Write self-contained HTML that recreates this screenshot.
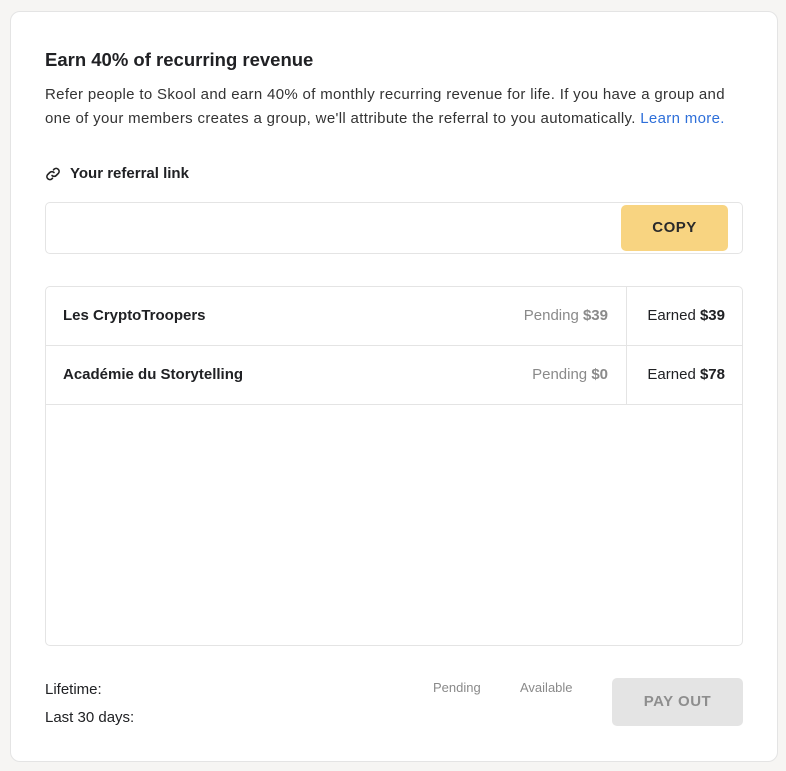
<!DOCTYPE html>
<html><head><style>
body{margin:0;width:786px;height:771px;background:#f6f5f3;font-family:"Liberation Sans",sans-serif;color:#202124;position:relative;overflow:hidden}
.card{position:absolute;left:10px;top:11px;width:766px;height:749px;background:#fff;border:1px solid #e4e4e4;border-radius:10px}
.a{position:absolute;white-space:nowrap}
.line{position:absolute;background:#e4e4e4}
</style></head><body>
<div class="card"></div>
<div class="a" style="left:45px;top:49px;font-size:18.5px;font-weight:bold">Earn 40% of recurring revenue</div>
<div class="a" style="left:45px;top:83px;font-size:15px;line-height:24px;color:#333;letter-spacing:.33px">Refer people to Skool and earn 40% of monthly recurring revenue for life. If you have a group and<br>one of your members creates a group, we'll attribute the referral to you automatically. <span style="color:#2e6fd9">Learn more.</span></div>
<svg class="a" style="left:45px;top:166px" width="16" height="16" viewBox="0 0 16 16" fill="none" stroke="#222" stroke-width="1.6" stroke-linecap="round"><path d="M7 9.5a3 3 0 0 0 4.2 0l2.3-2.3a3 3 0 0 0-4.2-4.2L8.5 3.8"/><path d="M9 6.5a3 3 0 0 0-4.2 0L2.5 8.8a3 3 0 0 0 4.2 4.2l.8-.8"/></svg>
<div class="a" style="left:70px;top:165px;font-size:15px;font-weight:bold">Your referral link</div>
<div class="a" style="left:45px;top:202px;width:696px;height:50px;border:1px solid #e4e4e4;border-radius:5px"></div>
<div class="a" style="left:621px;top:205px;width:107px;height:46px;background:#f8d481;border-radius:5px;font-size:15px;font-weight:bold;letter-spacing:.5px;text-align:center;line-height:46px;color:#2a2a2a">COPY</div>
<div class="a" style="left:45px;top:286px;width:696px;height:358px;border:1px solid #e4e4e4;border-radius:5px"></div>
<div class="line" style="left:46px;top:345px;width:696px;height:1px"></div>
<div class="line" style="left:46px;top:404px;width:696px;height:1px"></div>
<div class="line" style="left:626px;top:287px;width:1px;height:117px"></div>
<div class="a" style="left:63px;top:307px;font-size:15px;font-weight:bold">Les CryptoTroopers</div>
<div class="a" style="right:178px;top:307px;font-size:15px;color:#8a8a8a">Pending <b>$39</b></div>
<div class="a" style="right:61px;top:307px;font-size:15px">Earned <b>$39</b></div>
<div class="a" style="left:63px;top:366px;font-size:15px;font-weight:bold">Académie du Storytelling</div>
<div class="a" style="right:178px;top:366px;font-size:15px;color:#8a8a8a">Pending <b>$0</b></div>
<div class="a" style="right:61px;top:366px;font-size:15px">Earned <b>$78</b></div>
<div class="a" style="left:45px;top:681px;font-size:15px">Lifetime:</div>
<div class="a" style="left:45px;top:709px;font-size:15px">Last 30 days:</div>
<div class="a" style="left:433px;top:680px;font-size:13px;color:#8a8a8a">Pending</div>
<div class="a" style="left:520px;top:680px;font-size:13px;color:#8a8a8a">Available</div>
<div class="a" style="left:612px;top:678px;width:131px;height:48px;background:#e4e4e4;border-radius:5px;font-size:15px;font-weight:bold;letter-spacing:.5px;text-align:center;line-height:48px;color:#8e8e8e">PAY OUT</div>
</body></html>
